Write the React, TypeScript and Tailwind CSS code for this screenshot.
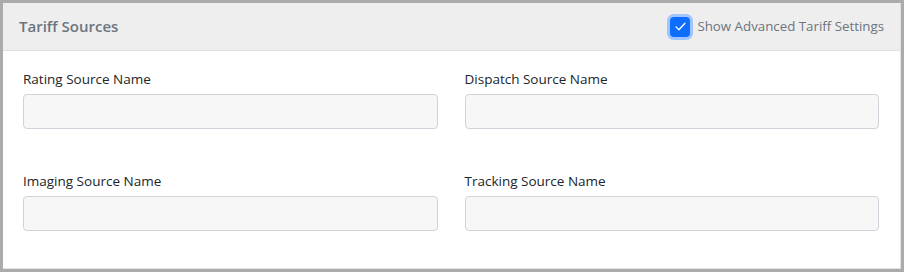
import React from "react";

function Field({ label }: { label: string }) {
  return (
    <div className="flex flex-col">
      <label className="h-[20px] leading-[20px] text-[13.5px] text-[#212529]">{label}</label>
      <div className="mt-[5px] h-[35px] rounded-[4px] border border-[#ced4da] bg-[#f7f7f7]" />
    </div>
  );
}

export default function App() {
  return (
    <div
      className="w-[904px] h-[272px] border-[3px] border-[#ababab] bg-white"
      style={{ fontFamily: '"Segoe UI", "Open Sans", sans-serif' }}
    >
      <div className="h-full flex flex-col border border-[#e2e2e2] border-t-0 border-l-0">
        <div className="h-[48px] shrink-0 flex items-center justify-between bg-[#eeeeee] border-b border-[#dee2e6] pl-[16px] pr-[16px]">
          <span className="text-[15px] font-semibold text-[#6c757d]">Tariff Sources</span>
          <label className="flex items-center gap-[7px]">
            <span className="flex items-center justify-center w-[20px] h-[20px] rounded-[4px] bg-[#0d6efd] ring-[3px] ring-[#9ec5fe]">
              <svg width="13" height="13" viewBox="0 0 16 16" fill="none">
                <path d="M2.5 8.5l3.5 3.5 7.5-8" stroke="white" strokeWidth="1.6" strokeLinecap="round" strokeLinejoin="round" />
              </svg>
            </span>
            <span className="text-[13.3px] text-[#6c757d]">Show Advanced Tariff Settings</span>
          </label>
        </div>
        <div className="grid grid-cols-2 gap-x-[27px] gap-y-[42px] pl-[20px] pr-[21px] pt-[18px]">
          <Field label="Rating Source Name" />
          <Field label="Dispatch Source Name" />
          <Field label="Imaging Source Name" />
          <Field label="Tracking Source Name" />
        </div>
      </div>
    </div>
  );
}
